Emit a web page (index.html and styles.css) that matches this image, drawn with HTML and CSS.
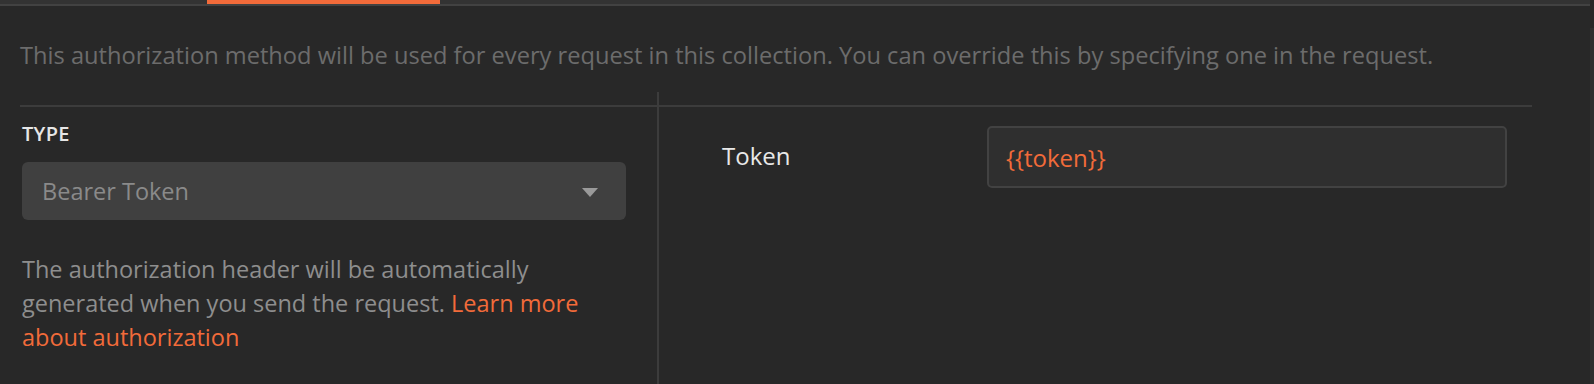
FILE: index.html
```html
<!DOCTYPE html>
<html>
<head>
<meta charset="utf-8">
<link rel="stylesheet" href="styles.css">
</head>
<body>
<div class="page">
  <div class="tabbar"><div class="tab-active"></div></div>
  <div class="desc">This authorization method will be used for every request in this collection. You can override this by specifying one in the request.</div>
  <div class="cols">
    <div class="left">
      <div class="type-label">TYPE</div>
      <div class="select">
        <span class="select-text">Bearer Token</span>
        <span class="caret"></span>
      </div>
      <p class="help">The authorization header will be automatically generated when you send the request. <a class="link">Learn more about authorization</a></p>
    </div>
    <div class="right">
      <div class="row">
        <div class="field-label">Token</div>
        <div class="input"><span class="var">{{token}}</span></div>
      </div>
    </div>
  </div>
  <div class="scroll"></div>
</div>
</body>
</html>
```

FILE: styles.css
```css
html, body {
  margin: 0;
  padding: 0;
  background: #282828;
}
body {
  font-family: "Open Sans", "Noto Sans", sans-serif;
  width: 1594px;
  height: 384px;
  overflow: hidden;
}
.page {
  position: relative;
  height: 384px;
}
.tabbar {
  height: 4px;
  width: 1590px;
  background: #333333;
  border-bottom: 2px solid #424242;
}
.tab-active {
  margin-left: 207px;
  width: 233px;
  height: 4px;
  background: #f26b3a;
}
.desc {
  margin: 0 62px 0 20px;
  padding-top: 33px;
  height: 66px;
  border-bottom: 2px solid #3c3c3c;
  font-size: 23.65px;
  line-height: 32px;
  color: #6c6c6c;
  white-space: nowrap;
}
.cols {
  display: flex;
  margin-top: -15px;
  height: 300px;
}
.left {
  width: 604px;
  padding: 29px 31px 0 22px;
  border-right: 2px solid #3c3c3c;
}
.type-label {
  font-size: 20px;
  font-weight: 600;
  line-height: 25px;
  color: #e6e6e6;
  letter-spacing: 0.3px;
}
.select {
  margin-top: 16px;
  height: 58px;
  background: #404040;
  border-radius: 6px;
  display: flex;
  align-items: center;
  justify-content: space-between;
  padding: 0 28px 0 20px;
}
.select-text {
  font-size: 23.5px;
  color: #8a8a8a;
}
.caret {
  width: 0;
  height: 0;
  border-left: 8px solid transparent;
  border-right: 8px solid transparent;
  border-top: 9px solid #9a9a9a;
  margin-top: 2px;
}
.help {
  margin: 32px 0 0 0;
  font-size: 23.5px;
  line-height: 34px;
  color: #8e8e8e;
}
.link {
  color: #f26b3a;
  text-decoration: none;
}
.right {
  padding: 34px 0 0 63px;
}
.row {
  display: flex;
  align-items: center;
}
.field-label {
  width: 265px;
  font-size: 24px;
  color: #e8e8e8;
  padding-bottom: 4px;
}
.input {
  width: 499px;
  height: 58px;
  border: 2px solid #424242;
  border-radius: 5px;
  background: #2f2f2f;
  display: flex;
  align-items: center;
  padding-left: 17px;
}
.var {
  font-size: 24px;
  color: #f26b3a;
}
.scroll {
  position: absolute;
  right: 0;
  top: 28px;
  bottom: 0;
  width: 4px;
  background: #2f2f2f;
}
```
